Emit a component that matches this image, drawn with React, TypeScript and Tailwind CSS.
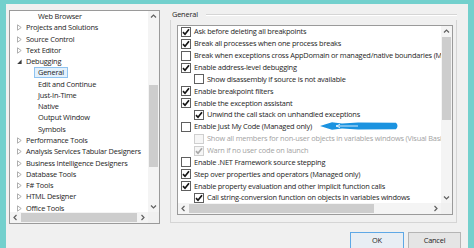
import React from "react";
import clsx from "clsx";

type TreeItem = { label: string; level: 0 | 1; arrow?: "closed" | "open"; selected?: boolean };

const treeItems: TreeItem[] = [
  { label: "Web Browser", level: 1 },
  { label: "Projects and Solutions", level: 0, arrow: "closed" },
  { label: "Source Control", level: 0, arrow: "closed" },
  { label: "Text Editor", level: 0, arrow: "closed" },
  { label: "Debugging", level: 0, arrow: "open" },
  { label: "General", level: 1, selected: true },
  { label: "Edit and Continue", level: 1 },
  { label: "Just-In-Time", level: 1 },
  { label: "Native", level: 1 },
  { label: "Output Window", level: 1 },
  { label: "Symbols", level: 1 },
  { label: "Performance Tools", level: 0, arrow: "closed" },
  { label: "Analysis Services Tabular Designers", level: 0, arrow: "closed" },
  { label: "Business Intelligence Designers", level: 0, arrow: "closed" },
  { label: "Database Tools", level: 0, arrow: "closed" },
  { label: "F# Tools", level: 0, arrow: "closed" },
  { label: "HTML Designer", level: 0, arrow: "closed" },
  { label: "Office Tools", level: 0, arrow: "closed" },
];

type Option = { label: string; level: 0 | 1; checked: boolean; disabled?: boolean };

const options: Option[] = [
  { label: "Ask before deleting all breakpoints", level: 0, checked: true },
  { label: "Break all processes when one process breaks", level: 0, checked: true },
  { label: "Break when exceptions cross AppDomain or managed/native boundaries (Managed only)", level: 0, checked: false },
  { label: "Enable address-level debugging", level: 0, checked: true },
  { label: "Show disassembly if source is not available", level: 1, checked: false },
  { label: "Enable breakpoint filters", level: 0, checked: true },
  { label: "Enable the exception assistant", level: 0, checked: true },
  { label: "Unwind the call stack on unhandled exceptions", level: 1, checked: true },
  { label: "Enable Just My Code (Managed only)", level: 0, checked: false },
  { label: "Show all members for non-user objects in variables windows (Visual Basic only)", level: 1, checked: false, disabled: true },
  { label: "Warn if no user code on launch", level: 1, checked: true, disabled: true },
  { label: "Enable .NET Framework source stepping", level: 0, checked: false },
  { label: "Step over properties and operators (Managed only)", level: 0, checked: true },
  { label: "Enable property evaluation and other implicit function calls", level: 0, checked: true },
  { label: "Call string-conversion function on objects in variables windows", level: 1, checked: true },
];

// small scrollbar chevrons
const Chevron = ({ dir }: { dir: "up" | "down" | "left" | "right" }) => {
  const pts = {
    up: "1,4.5 3.5,2 6,4.5",
    down: "1,2.5 3.5,5 6,2.5",
    left: "4.5,1 2,3.5 4.5,6",
    right: "2.5,1 5,3.5 2.5,6",
  }[dir];
  return (
    <svg width="7" height="7" viewBox="0 0 7 7">
      <polyline points={pts} fill="none" stroke="#606060" strokeWidth="1.2" />
    </svg>
  );
};

const TreeArrow = ({ kind }: { kind: "closed" | "open" }) =>
  kind === "closed" ? (
    <svg width="5" height="7" viewBox="0 0 5 7">
      <path d="M0.5 0.8 L4.2 3.5 L0.5 6.2 Z" fill="none" stroke="#a6a6a6" strokeWidth="0.9" />
    </svg>
  ) : (
    <svg width="5" height="7" viewBox="0 0 5 7">
      <path d="M4.6 1.6 L4.6 6 L0.2 6 Z" fill="#3c3c3c" />
    </svg>
  );

const Check = ({ checked, disabled }: { checked: boolean; disabled?: boolean }) => (
  <span
    className={clsx(
      "w-[10px] h-[10px] border flex items-center justify-center shrink-0",
      disabled ? "border-[#cfcfcf] bg-[#f6f6f6]" : "border-[#5f5f5f] bg-white"
    )}>
    {checked && (
      <svg width="8" height="8" viewBox="0 0 8 8">
        <path d="M1 4.2 L3 6.3 L7 1.3" fill="none" stroke={disabled ? "#a8a8a8" : "#141414"} strokeWidth="1.7" />
      </svg>
    )}
  </span>
);

const Tree = () => (
  <div className="w-[151px] h-[214px] border border-[#9a9a9a] bg-white flex flex-col">
    <div className="flex flex-1 min-h-0">
      <div className="flex-1 overflow-hidden">
        {treeItems.map((item) => (
          <div
            key={item.label}
            className={clsx(
              "h-[11.27px] flex items-center whitespace-nowrap",
              item.level === 0 ? "pl-[7px]" : "pl-[28px]"
            )}>
            {item.arrow && (
              <span className="w-[9px] flex items-center shrink-0">
                <TreeArrow kind={item.arrow} />
              </span>
            )}
            {item.selected ? (
              <span className="-ml-[4px] px-[3px] h-[11px] flex items-center border border-[#8fc3f0] bg-[#e3f1fd]">
                {item.label}
              </span>
            ) : (
              <span>{item.label}</span>
            )}
          </div>
        ))}
      </div>
      {/* vertical scrollbar */}
      <div className="w-[11px] bg-[#f4f4f4] flex flex-col">
        <div className="h-[11px] flex items-center justify-center">
          <Chevron dir="up" />
        </div>
        <div className="h-[63px]" />
        <div className="h-[82px] mx-[1px] bg-[#cdcdcd]" />
        <div className="flex-1" />
        <div className="h-[11px] flex items-center justify-center">
          <Chevron dir="down" />
        </div>
      </div>
    </div>
    {/* horizontal scrollbar */}
    <div className="h-[11px] flex">
      <div className="w-[138px] bg-[#f4f4f4] flex">
        <div className="w-[11px] flex items-center justify-center">
          <Chevron dir="left" />
        </div>
        <div className="w-[116px] my-[1px] bg-[#cdcdcd]" />
        <div className="w-[11px] flex items-center justify-center">
          <Chevron dir="right" />
        </div>
      </div>
      <div className="flex-1 bg-[#f0f0f0]" />
    </div>
  </div>
);

const OptionsList = () => (
  <div className="w-[276px] h-[190px] border border-[#9a9a9a] bg-white flex flex-col">
    <div className="flex flex-1 min-h-0">
      <div className="flex-1 overflow-hidden">
        {options.map((opt) => (
          <div
            key={opt.label}
            className={clsx(
              "h-[11.86px] flex items-center gap-[3px] whitespace-nowrap",
              opt.level === 0 ? "pl-[3px]" : "pl-[16px]",
              opt.disabled ? "text-[#a3a3a3]" : "text-[#1e1e1e]"
            )}>
            <Check checked={opt.checked} disabled={opt.disabled} />
            <span>{opt.label}</span>
          </div>
        ))}
      </div>
      <div className="w-[11px] bg-[#f4f4f4] flex flex-col">
        <div className="h-[11px] flex items-center justify-center">
          <Chevron dir="up" />
        </div>
        <div className="h-[83px] mx-[1px] bg-[#cdcdcd]" />
        <div className="flex-1" />
        <div className="h-[11px] flex items-center justify-center">
          <Chevron dir="down" />
        </div>
      </div>
    </div>
    <div className="h-[11px] flex">
      <div className="flex-1 bg-[#f4f4f4] flex">
        <div className="w-[11px] flex items-center justify-center">
          <Chevron dir="left" />
        </div>
        <div className="w-[185px] my-[1px] bg-[#cdcdcd]" />
        <div className="flex-1" />
        <div className="w-[11px] flex items-center justify-center">
          <Chevron dir="right" />
        </div>
      </div>
      <div className="w-[11px] bg-[#f0f0f0]" />
    </div>
  </div>
);

const App = () => {
  return (
    <div
      className="relative w-[474px] h-[248px] overflow-hidden bg-[#73d0cd] pl-[6px] pr-[6px] pt-[4px] text-[7.4px] tracking-[-0.2px] text-[#1e1e1e]"
      style={{ fontFamily: '"Open Sans", "Noto Sans", sans-serif' }}>
      <div className="h-full bg-[#f0f0f0] flex flex-col">
        <div className="flex pl-[3px] pt-[6px]">
          <Tree />

          {/* General page */}
          <div className="ml-[10px] w-[287px] flex flex-col">
            <div className="h-[10px] flex items-center">
              <span className="pl-[2px]">General</span>
              <div className="flex-1 ml-[8px] h-[2px] border-t border-[#d5d5d5] border-b border-b-white" />
            </div>
            <div className="h-[203px] border-l border-r border-b border-[#d5d5d5] pl-[6px] pt-[5px]">
              <OptionsList />
            </div>
          </div>
        </div>

        {/* Buttons */}
        <div className="flex justify-end gap-[4px] pr-[7px] mt-[8px]">
          <button className="w-[54px] h-[17px] border border-[#5ea8e6] bg-[#e8eef4] text-[7.4px] text-[#1e1e1e]">
            OK
          </button>
          <button className="w-[53px] h-[17px] border border-[#b5b5b5] bg-[#e5e5e5] text-[7.4px] text-[#1e1e1e]">
            Cancel
          </button>
        </div>
      </div>

      {/* blue annotation arrow */}
      <svg className="absolute left-[318px] top-[118px]" width="84" height="16" viewBox="0 0 84 16">
        <path
          d="M2 8 L14 4.2 L24 5.6 L40 4.4 L78 4.8 Q81 8 78 11.2 L40 11.6 L24 10.4 L14 11.8 Z"
          fill="#1b93e0"
        />
        <path d="M18 8 L40 8 M18 8 L22 6.4 M18 8 L22 9.6" stroke="#eaf6ff" strokeWidth="0.9" fill="none" />
      </svg>
    </div>
  );
};

export default App;
